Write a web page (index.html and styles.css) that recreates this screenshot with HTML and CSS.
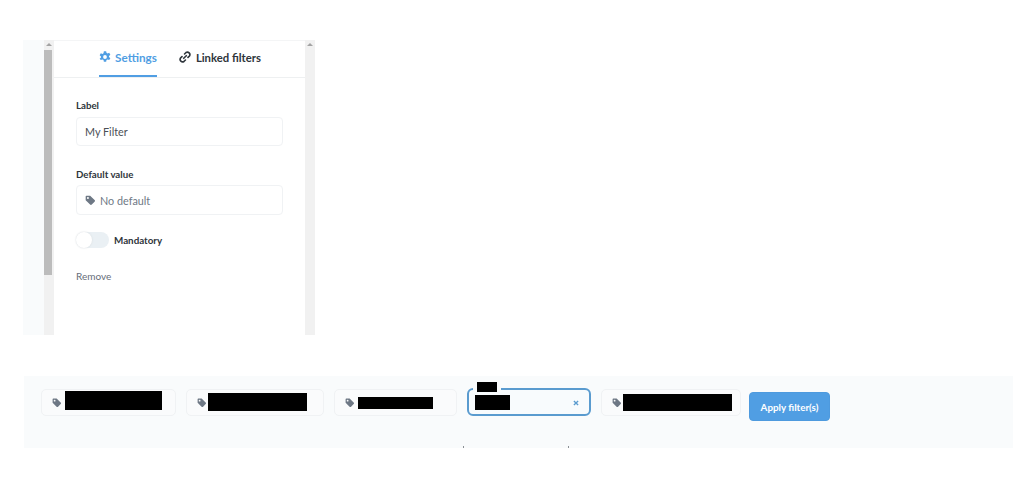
FILE: index.html
```html
<!DOCTYPE html>
<html lang="en">
<head>
<meta charset="utf-8">
<title>Filter settings</title>
<link rel="stylesheet" href="styles.css">
</head>
<body>
<section class="panel">
  <div class="gutter"></div>
  <div class="scrollbar scrollbar-left">
    <span class="arrow"></span>
    <span class="thumb"></span>
  </div>
  <div class="content">
    <nav class="tabs">
      <a class="tab tab-active">
        <svg class="tab-icon" viewBox="1.200 .4 13.600 14.600"><path fill="#509ee3" fill-rule="evenodd" d="M6.600.6h2.800l.4 2 1.300.7 2-.7 1.400 2.400-1.600 1.400v1.300l1.600 1.400-1.400 2.400-2-.7-1.300.7-.4 2H6.600l-.4-2-1.300-.7-2 .7L1.500 9.700l1.600-1.400V7L1.500 5.600l1.400-2.400 2 .7 1.300-.7zM8 5.400a2.300 2.300 0 1 0 0 4.600 2.300 2.300 0 0 0 0-4.600z"/></svg>
        Settings
      </a>
      <a class="tab tab-linked">
        <svg class="tab-icon" viewBox="1 1 14 14"><path fill="none" stroke="#2e353b" stroke-width="1.900" stroke-linecap="round" d="M6.500 9.500l3-3M7.500 4.500l1.700-1.700a2.900 2.900 0 0 1 4 4L11.500 8.500M8.500 11.500l-1.700 1.700a2.900 2.900 0 0 1-4-4L4.500 7.500"/></svg>
        Linked filters
      </a>
    </nav>
    <div class="form">
      <label class="field-label">Label</label>
      <div class="input input-first">My Filter</div>
      <label class="field-label field-label-second">Default value</label>
      <div class="input input-muted">
        <svg class="tag" viewBox="0 0 12 12"><path fill-rule="evenodd" d="M1.800.8h4.400l5.300 5.300a1.400 1.400 0 0 1 0 2l-3.400 3.400a1.400 1.400 0 0 1-2 0L.8 6.200V1.800a1 1 0 0 1 1-1zM3.500 2.300a1.200 1.200 0 1 0 0 2.400 1.200 1.200 0 0 0 0-2.400z"/></svg>
        No default
      </div>
      <div class="mandatory">
        <span class="toggle"><span class="knob"></span></span>
        <span>Mandatory</span>
      </div>
      <a class="remove">Remove</a>
    </div>
  </div>
  <div class="scrollbar scrollbar-right">
    <span class="arrow"></span>
  </div>
</section>

<section class="bar">
  <div class="widget w1">
    <svg class="tag" viewBox="0 0 12 12"><path fill-rule="evenodd" d="M1.800.8h4.400l5.300 5.300a1.400 1.400 0 0 1 0 2l-3.400 3.400a1.400 1.400 0 0 1-2 0L.8 6.200V1.800a1 1 0 0 1 1-1zM3.500 2.300a1.200 1.200 0 1 0 0 2.400 1.200 1.200 0 0 0 0-2.400z"/></svg>
    <span class="redact r1"></span>
  </div>
  <div class="widget w2">
    <svg class="tag" viewBox="0 0 12 12"><path fill-rule="evenodd" d="M1.800.8h4.400l5.300 5.300a1.400 1.400 0 0 1 0 2l-3.400 3.400a1.400 1.400 0 0 1-2 0L.8 6.200V1.800a1 1 0 0 1 1-1zM3.500 2.300a1.200 1.200 0 1 0 0 2.400 1.200 1.200 0 0 0 0-2.400z"/></svg>
    <span class="redact r2"></span>
  </div>
  <div class="widget w3">
    <svg class="tag" viewBox="0 0 12 12"><path fill-rule="evenodd" d="M1.800.8h4.400l5.300 5.300a1.400 1.400 0 0 1 0 2l-3.400 3.400a1.400 1.400 0 0 1-2 0L.8 6.200V1.800a1 1 0 0 1 1-1zM3.500 2.300a1.200 1.200 0 1 0 0 2.400 1.200 1.200 0 0 0 0-2.400z"/></svg>
    <span class="redact r3"></span>
  </div>
  <div class="widget widget-focus">
    <span class="float-label"><span class="redact r4-label"></span></span>
    <span class="redact r4"></span>
    <svg class="clear" viewBox="0 0 8 8"><path d="M1.200 1.200l5.600 5.600M6.800 1.200L1.200 6.800"/></svg>
  </div>
  <div class="widget w5">
    <svg class="tag" viewBox="0 0 12 12"><path fill-rule="evenodd" d="M1.800.8h4.400l5.300 5.300a1.400 1.400 0 0 1 0 2l-3.400 3.400a1.400 1.400 0 0 1-2 0L.8 6.200V1.800a1 1 0 0 1 1-1zM3.500 2.300a1.200 1.200 0 1 0 0 2.400 1.200 1.200 0 0 0 0-2.400z"/></svg>
    <span class="redact r5"></span>
  </div>
  <button class="apply">Apply filter(s)</button>
  <span class="tick tick-a"></span>
  <span class="tick tick-b"></span>
</section>
</body>
</html>
```
FILE: styles.css
```css
* { box-sizing: border-box; }
html, body { margin: 0; padding: 0; background: #fff; }
body { font-family: "Lato", "Liberation Sans", sans-serif; color: #2e353b; height: 477px; overflow: hidden; }

.panel { display: flex; width: 292px; height: 295px; margin: 40px 0 0 23px; }
.gutter { width: 21px; background: #f9fbfc; }
.scrollbar { width: 10px; background: #f1f1f1; display: flex; flex-direction: column; align-items: center; }
.arrow { width: 0; height: 0; margin: 3px 0; border-left: 3px solid transparent; border-right: 3px solid transparent; border-bottom: 3px solid #a3a3a3; flex: none; }
.thumb { width: 8px; height: 225px; margin: 1px 2px 0 0; background: #bcbcbc; }
.content { flex: 1; border-top: 1px solid #f4f5f6; }

.tabs { display: flex; justify-content: center; height: 37px; gap: 22px; padding-left: 1px; border-bottom: 1px solid #eef0f1; }
.tab { display: flex; align-items: center; gap: 5px; height: 36px; padding-bottom: 2px; font-size: 11.700px; font-weight: 700; color: #2e353b; border-bottom: 2px solid transparent; }
.tab-linked { font-size: 11.300px; }
.tab-active { color: #509ee3; border-bottom-color: #509ee3; gap: 4px; }
.tab-icon { width: 12px; height: 12px; flex: none; }

.form { padding: 21px 22px 0; }
.field-label { display: block; font-size: 9.700px; font-weight: 700; line-height: 13px; color: #2e353b; }
.field-label-second { margin-top: 22px; }
.input { display: flex; align-items: center; height: 30px; margin-top: 5px; padding: 0 8px; border: 1px solid #f0f2f4; border-radius: 4px; font-size: 10.800px; color: #4a4f55; background: #fff; }
.input-first { height: 29px; }
.input-muted { margin-top: 4px; color: #6e7885; gap: 5px; }

.tag { width: 10px; height: 10px; fill: #6e7885; flex: none; }
.widget .tag { width: 9px; height: 9px; }

.mandatory { display: flex; align-items: center; gap: 5px; margin-top: 17px; font-size: 9.800px; font-weight: 700; }
.toggle { display: block; width: 33px; height: 16px; border-radius: 8px; background: #eaf0f4; }
.knob { display: block; width: 16px; height: 16px; border-radius: 50%; background: #fff; box-shadow: 0 0 2px #d5d9dc; }
.remove { display: block; margin-top: 22px; font-size: 10px; font-weight: 400; color: #666e79; }

.bar { position: relative; display: flex; align-items: flex-start; width: 989px; height: 72px; margin: 41px 0 0 24px; padding: 13px 0 0 17px; background: #f9fbfc; }
.widget { position: relative; display: flex; align-items: center; height: 27px; margin-right: 10px; padding-left: 10px; border: 1px solid #f0f2f4; border-radius: 5px; background: #fafbfc; flex: none; }
.w1 { width: 135px; }
.w2 { width: 138px; }
.w3 { width: 123px; }
.w5 { width: 140px; margin-right: 8px; }
.widget-focus { width: 124px; height: 28px; margin-top: -1px; padding-left: 6px; border: 2px solid #5a9bcf; border-radius: 6px; background: #f8fbfd; }

.redact { display: block; background: #000; flex: none; }
.r1 { width: 97px; height: 19px; margin: -4px 0 0 4px; }
.r2 { width: 99px; height: 18px; margin: -1px 0 0 2px; }
.r3 { width: 75px; height: 12px; margin: 1px 0 0 4px; }
.r4 { width: 35px; height: 15px; }
.r5 { width: 109px; height: 17px; margin-left: 2px; }

.float-label { position: absolute; left: 4px; top: -8px; padding: 0 4px; background: #f9fbfc; }
.r4-label { width: 20px; height: 10px; }

.clear { position: absolute; right: 10px; top: 10px; width: 6px; height: 6px; stroke: #5a9bcf; stroke-width: 1.800; fill: none; }

.apply { width: 81px; height: 29px; margin-top: 3px; padding: 0; border: 1px solid #4e9ade; border-radius: 4px; background: #509ee3; color: #fff; font-family: inherit; font-size: 9.800px; font-weight: 700; }

.tick { position: absolute; bottom: 0; width: 1px; height: 2px; background: #8a8f94; }
.tick-a { left: 439px; }
.tick-b { left: 544px; }
```
